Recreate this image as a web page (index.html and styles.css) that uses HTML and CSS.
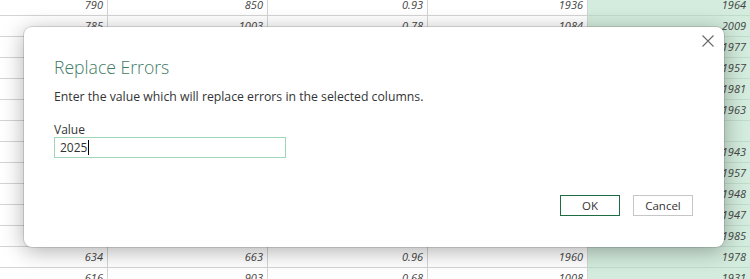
FILE: index.html
```html
<!DOCTYPE html>
<html>
<head>
<meta charset="utf-8">
<link rel="stylesheet" href="styles.css">
</head>
<body>
<div class="sheet">
  <div class="row"><div class="c">790</div><div class="c">850</div><div class="c">0.93</div><div class="c">1936</div><div class="c g">1964</div></div>
  <div class="row"><div class="c">785</div><div class="c">1003</div><div class="c">0.78</div><div class="c">1084</div><div class="c g">2009</div></div>
  <div class="row"><div class="c">812</div><div class="c">940</div><div class="c">0.86</div><div class="c">1752</div><div class="c g">1977</div></div>
  <div class="row"><div class="c">768</div><div class="c">905</div><div class="c">0.85</div><div class="c">1673</div><div class="c g">1957</div></div>
  <div class="row"><div class="c">801</div><div class="c">932</div><div class="c">0.86</div><div class="c">1733</div><div class="c g">1981</div></div>
  <div class="row"><div class="c">779</div><div class="c">918</div><div class="c">0.85</div><div class="c">1697</div><div class="c g">1963</div></div>
  <div class="row"><div class="c"></div><div class="c"></div><div class="c"></div><div class="c"></div><div class="c g"></div></div>
  <div class="row"><div class="c">754</div><div class="c">889</div><div class="c">0.85</div><div class="c">1643</div><div class="c g">1943</div></div>
  <div class="row"><div class="c">766</div><div class="c">901</div><div class="c">0.85</div><div class="c">1667</div><div class="c g">1957</div></div>
  <div class="row"><div class="c">759</div><div class="c">894</div><div class="c">0.85</div><div class="c">1653</div><div class="c g">1948</div></div>
  <div class="row"><div class="c">757</div><div class="c">892</div><div class="c">0.85</div><div class="c">1649</div><div class="c g">1947</div></div>
  <div class="row"><div class="c">793</div><div class="c">925</div><div class="c">0.86</div><div class="c">1718</div><div class="c g">1985</div></div>
  <div class="row"><div class="c">634</div><div class="c">663</div><div class="c">0.96</div><div class="c">1960</div><div class="c g">1978</div></div>
  <div class="row"><div class="c">616</div><div class="c">903</div><div class="c">0.68</div><div class="c">1008</div><div class="c g">1931</div></div>
</div>

<div class="dialog">
  <button class="close" aria-label="Close">
    <svg width="12" height="12" viewBox="0 0 12 12"><path d="M0.5 0.5 L11.5 11.5 M11.5 0.5 L0.5 11.5" stroke="#6a6a6a" stroke-width="1.1" fill="none"/></svg>
  </button>
  <h1 class="title">Replace Errors</h1>
  <p class="desc">Enter the value which will replace errors in the selected columns.</p>
  <label class="label">Value</label>
  <div class="input"><span>2025</span><span class="caret"></span></div>
  <div class="actions">
    <button class="btn ok">OK</button>
    <button class="btn">Cancel</button>
  </div>
</div>
</body>
</html>
```
FILE: styles.css
```css
html, body {
  margin: 0;
  padding: 0;
  width: 750px;
  height: 279px;
  overflow: hidden;
  background: #fff;
  font-family: "Open Sans", "Noto Sans", sans-serif;
}

.sheet {
  margin-top: -5px;
  display: flex;
  flex-direction: column;
}

.row {
  display: grid;
  grid-template-columns: 108px 160px 160px 160px 162px;
  height: 21px;
}

.c {
  box-sizing: border-box;
  border-right: 1px solid #d4d4d4;
  border-bottom: 1px solid #d4d4d4;
  font-family: "Open Sans", sans-serif;
  font-style: italic;
  font-size: 11px;
  color: #444;
  text-align: right;
  padding-right: 4px;
  line-height: 20px;
}

.c.g {
  background: #d3ecdd;
  border-bottom-color: #bfdccb;
  border-right: none;
  padding-right: 4px;
}

.dialog {
  position: absolute;
  left: 24px;
  top: 27px;
  width: 700px;
  height: 220px;
  box-sizing: border-box;
  background: #fff;
  border-radius: 8px;
  box-shadow: 0 0 0 1px rgba(0,0,0,0.12), 0 4px 22px rgba(0,0,0,0.32);
  padding: 28px 31px 0 30px;
  display: flex;
  flex-direction: column;
  align-items: flex-start;
}

.close {
  position: absolute;
  right: 10px;
  top: 8px;
  width: 12px;
  height: 12px;
  padding: 0;
  border: none;
  background: none;
  display: flex;
}

.title {
  margin: 0;
  font-weight: 300;
  font-size: 17.6px;
  line-height: 24px;
  color: #3e7a64;
}

.desc {
  margin: 9px 0 0;
  font-size: 12.25px;
  line-height: 18px;
  color: #333;
}

.label {
  margin-top: 16px;
  font-size: 12px;
  line-height: 16px;
  color: #333;
}

.input {
  margin-top: -1px;
  width: 232px;
  height: 21px;
  box-sizing: border-box;
  border: 1px solid #9fd6b8;
  padding: 0 5px;
  display: flex;
  align-items: center;
  font-size: 12px;
  color: #333;
}

.caret {
  width: 1px;
  height: 15px;
  background: #000;
  margin-left: 1px;
}

.actions {
  align-self: flex-end;
  margin-top: 37px;
  display: flex;
  gap: 13px;
}

.btn {
  width: 60px;
  height: 21px;
  box-sizing: border-box;
  background: #fff;
  border: 1px solid #c6c6c6;
  font-family: "Open Sans", sans-serif;
  font-size: 11.5px;
  color: #333;
  padding: 0;
}

.btn.ok {
  border-color: #1e6b44;
}
```
